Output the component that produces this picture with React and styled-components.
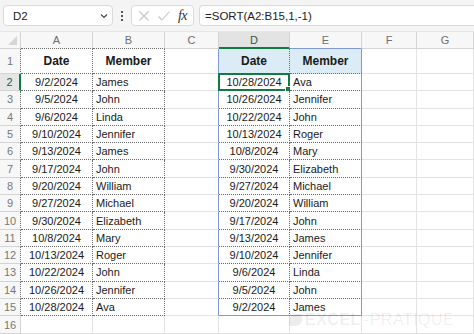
import React from "react";
import styled, { createGlobalStyle } from "styled-components";

const GlobalStyle = createGlobalStyle`
	html, body {
		margin: 0;
		padding: 0;
		background: #fff;
	}
	body {
		font-family: "Liberation Sans", Arial, sans-serif;
	}
`;

const GREEN = "#107c41";
const GRID = "1px solid #e3e3e3";
const HEAD = "1px solid #d4d4d4";
const DOTTED = "1px dotted #6a6a6a";
const SPILL = "1px solid #7f9ad2";

const COLS = ["A", "B", "C", "D", "E", "F", "G"];

const members = [
	["9/2/2024", "James"],
	["9/5/2024", "John"],
	["9/6/2024", "Linda"],
	["9/10/2024", "Jennifer"],
	["9/13/2024", "James"],
	["9/17/2024", "John"],
	["9/20/2024", "William"],
	["9/27/2024", "Michael"],
	["9/30/2024", "Elizabeth"],
	["10/8/2024", "Mary"],
	["10/13/2024", "Roger"],
	["10/22/2024", "John"],
	["10/26/2024", "Jennifer"],
	["10/28/2024", "Ava"],
];
const sorted = [...members].reverse();

const tableOf = (r, c) => {
	if (r < 1 || r > 15) return null;
	if (c === 1 || c === 2) return "src";
	if (c === 4 || c === 5) return "spill";
	return null;
};

// border between (r,c) and (r,c+1)
const rightBorder = (r, c) => {
	const a = tableOf(r, c);
	const b = tableOf(r, c + 1);
	if (r === 2 && c === 0) return `2px solid ${GREEN}`;
	if (a && a === b) return DOTTED;
	if (a === "spill" || b === "spill") return SPILL;
	if (a || b) return DOTTED;
	if (r === 0 || c === 0) return HEAD;
	return GRID;
};

// border between (r,c) and (r+1,c)
const bottomBorder = (r, c) => {
	const a = tableOf(r, c);
	const b = tableOf(r + 1, c);
	if (r === 0 && c === 4) return `2px solid ${GREEN}`;
	if (a && a === b) return DOTTED;
	if (a === "spill" || b === "spill") return SPILL;
	if (a || b) return DOTTED;
	if (r === 0 || c === 0) return HEAD;
	return GRID;
};

const cellText = (r, c) => {
	if (r === 1) {
		if (c === 1 || c === 4) return "Date";
		if (c === 2 || c === 5) return "Member";
		return "";
	}
	if (r >= 2 && r <= 15) {
		if (c === 1) return members[r - 2][0];
		if (c === 2) return members[r - 2][1];
		if (c === 4) return sorted[r - 2][0];
		if (c === 5) return sorted[r - 2][1];
	}
	return "";
};

const ChevronDown = () => (
	<svg width="10" height="10" viewBox="0 0 10 10">
		<path d="M2 3.5 L5 6.5 L8 3.5" fill="none" stroke="#444" strokeWidth="1.1" />
	</svg>
);

const CancelIcon = () => (
	<svg width="12" height="12" viewBox="0 0 12 12">
		<path d="M1.5 1.5 L10.5 10.5 M10.5 1.5 L1.5 10.5" stroke="#c4c4c4" strokeWidth="1.1" />
	</svg>
);

const EnterIcon = () => (
	<svg width="14" height="12" viewBox="0 0 14 12">
		<path d="M1.5 6.5 L5 10 L12.5 1.5" fill="none" stroke="#c4c4c4" strokeWidth="1.1" />
	</svg>
);

const App = () => {
	const rows = [];
	for (let r = 0; r <= 16; r++) {
		for (let c = 0; c <= 7; c++) {
			const key = `${r}-${c}`;
			if (r === 0 && c === 0) {
				rows.push(
					<Corner key={key}>
						<CornerMark />
					</Corner>
				);
				continue;
			}
			if (r === 0) {
				rows.push(
					<ColHead key={key} $active={c === 4} style={{ borderRight: rightBorder(r, c), borderBottom: bottomBorder(r, c) }}>
						{COLS[c - 1]}
					</ColHead>
				);
				continue;
			}
			if (c === 0) {
				rows.push(
					<RowHead key={key} $active={r === 2} style={{ borderRight: rightBorder(r, c), borderBottom: bottomBorder(r, c) }}>
						{r}
					</RowHead>
				);
				continue;
			}
			const table = tableOf(r, c);
			const isDate = c === 1 || c === 4;
			rows.push(
				<Cell
					key={key}
					$head={r === 1 && !!table}
					$blue={r === 1 && table === "spill"}
					$center={r === 1 || isDate}
					style={{ borderRight: rightBorder(r, c), borderBottom: bottomBorder(r, c) }}
				>
					{cellText(r, c)}
					{r === 2 && c === 4 && (
						<Selection>
							<FillHandle />
						</Selection>
					)}
				</Cell>
			);
		}
	}

	return (
		<>
			<GlobalStyle />
			<Page>
				<FormulaBar>
					<NameBox>
						<span>D2</span>
						<ChevronDown />
					</NameBox>
					<Grip>
						<i />
						<i />
						<i />
					</Grip>
					<ActionBox>
						<CancelIcon />
						<EnterIcon />
						<Fx>fx</Fx>
					</ActionBox>
					<FormulaInput>=SORT(A2:B15,1,-1)</FormulaInput>
				</FormulaBar>
				<Sheet>{rows}</Sheet>
				<Watermark>
					<Leaf />
					<b>EXCEL</b>-PRATIQUE
				</Watermark>
			</Page>
		</>
	);
};

export default App;

const Page = styled.div`
	position: relative;
	width: 474px;
	height: 334px;
	overflow: hidden;
	background: #fff;
	display: flex;
	flex-direction: column;
`;

const FormulaBar = styled.div`
	height: 31px;
	flex: none;
	display: flex;
	align-items: center;
	gap: 5px;
	padding: 0 0 0 3px;
	background: #f4f4f4;
	border-bottom: 1px solid #e6e6e6;
	font-size: 11.5px;
	color: #222;
`;

const NameBox = styled.div`
	width: 110px;
	height: 21px;
	box-sizing: border-box;
	display: flex;
	align-items: center;
	justify-content: space-between;
	padding: 0 3px 0 9px;
	background: #fff;
	border: 1px solid #dadada;
	border-radius: 4px;
`;

const Grip = styled.div`
	display: flex;
	flex-direction: column;
	gap: 2px;
	padding: 0 3px;
	i {
		display: block;
		width: 2px;
		height: 2px;
		background: #555;
	}
`;

const ActionBox = styled.div`
	width: 63px;
	height: 21px;
	box-sizing: border-box;
	display: flex;
	align-items: center;
	justify-content: space-between;
	padding: 0 6px 0 6px;
	background: #fff;
	border: 1px solid #dadada;
	border-radius: 4px;
`;

const Fx = styled.span`
	font-family: "Liberation Serif", "Times New Roman", serif;
	font-style: italic;
	font-size: 14px;
	color: #333;
	letter-spacing: -0.5px;
`;

const FormulaInput = styled.div`
	flex: 1;
	height: 21px;
	box-sizing: border-box;
	display: flex;
	align-items: center;
	padding-left: 5px;
	background: #fff;
	border: 1px solid #dadada;
	border-right: none;
	border-radius: 4px 0 0 4px;
`;

const Sheet = styled.div`
	flex: 1;
	display: grid;
	grid-template-columns: 21px 72px 72px 54px 71px 72px 55px 57px;
	grid-template-rows: 17px 25px repeat(14, 17.3px) 1fr;
	font-size: 11px;
	color: #1a1a1a;
`;

const Corner = styled.div`
	position: relative;
	background: #f7f7f7;
	border-right: 1px solid #d4d4d4;
	border-bottom: 1px solid #d4d4d4;
`;

const CornerMark = styled.div`
	position: absolute;
	right: 3px;
	bottom: 3px;
	width: 0;
	height: 0;
	border-left: 9px solid transparent;
	border-bottom: 9px solid #d6d6d6;
`;

const ColHead = styled.div`
	box-sizing: border-box;
	display: flex;
	align-items: center;
	justify-content: center;
	background: ${(p) => (p.$active ? "#e3e3e3" : "#f7f7f7")};
	color: ${(p) => (p.$active ? "#2a5d3c" : "#6e6e6e")};
	font-size: 11px;
`;

const RowHead = styled.div`
	box-sizing: border-box;
	display: flex;
	align-items: center;
	justify-content: center;
	background: ${(p) => (p.$active ? "#e6e6e6" : "#f7f7f7")};
	color: ${(p) => (p.$active ? "#2a5d3c" : "#777")};
	font-size: 11px;
`;

const Cell = styled.div`
	position: relative;
	box-sizing: border-box;
	display: flex;
	align-items: center;
	justify-content: ${(p) => (p.$center ? "center" : "flex-start")};
	padding: ${(p) => (p.$center ? "0" : "0 3px")};
	background: ${(p) => (p.$blue ? "#dbecf6" : "#fff")};
	font-weight: ${(p) => (p.$head ? 700 : 400)};
	font-size: ${(p) => (p.$head ? "12px" : "11px")};
	white-space: nowrap;
`;

const Selection = styled.div`
	position: absolute;
	left: -1px;
	top: -1px;
	right: -1px;
	bottom: -1px;
	border: 2px solid ${GREEN};
	pointer-events: none;
`;

const FillHandle = styled.div`
	position: absolute;
	right: -4px;
	bottom: -4px;
	width: 5px;
	height: 5px;
	background: ${GREEN};
	border: 1px solid #fff;
`;

const Watermark = styled.div`
	position: absolute;
	left: 289px;
	top: 312px;
	display: flex;
	align-items: center;
	gap: 3px;
	font-size: 16px;
	line-height: 16px;
	letter-spacing: 0.5px;
	color: rgba(0, 0, 0, 0.07);
	pointer-events: none;
	b {
		font-weight: 700;
	}
`;

const Leaf = styled.span`
	display: inline-block;
	width: 13px;
	height: 12px;
	border-radius: 50% 10% 50% 10%;
	background: rgba(0, 0, 0, 0.07);
`;
